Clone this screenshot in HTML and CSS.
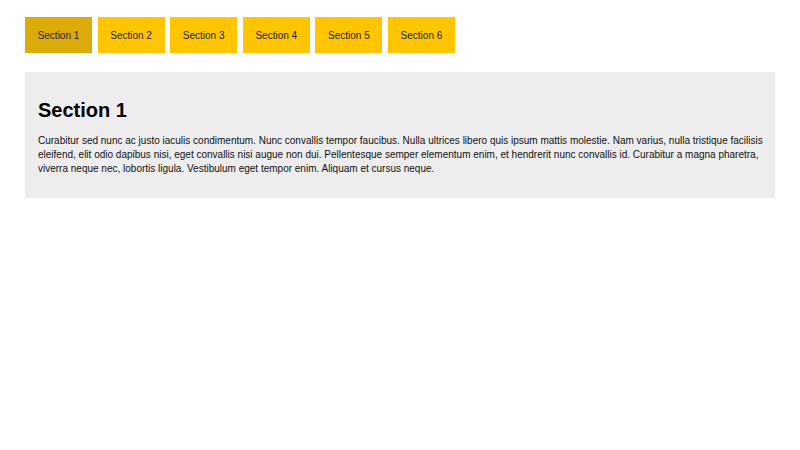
FILE: index.html
```html
<!DOCTYPE html>
<html lang="en">
<head>
    <meta charset="UTF-8">
    <meta name="viewport" content="width=device-width, initial-scale=1.0">
    <title>Tabs</title>
    <link rel="stylesheet" href="styles.css">
</head>
<body>
    <div class="tabs">
        <button class="tab active">Section 1</button>
        <button class="tab">Section 2</button>
        <button class="tab">Section 3</button>
        <button class="tab">Section 4</button>
        <button class="tab">Section 5</button>
        <button class="tab">Section 6</button>
    </div>

    <div class="tab-content">
        <h2>Section 1</h2>
        <p>Curabitur sed nunc ac justo iaculis condimentum. Nunc convallis tempor faucibus. Nulla ultrices libero quis ipsum mattis molestie. Nam varius, nulla tristique facilisis eleifend, elit odio dapibus nisi, eget convallis nisi augue non dui. Pellentesque semper elementum enim, et hendrerit nunc convallis id. Curabitur a magna pharetra, viverra neque nec, lobortis ligula. Vestibulum eget tempor enim. Aliquam et cursus neque.</p>
    </div>
</body>
</html>
```

FILE: styles.css
```css
body {
    font-family: 'Liberation Sans', Arial, sans-serif;
    background-color: #fff;
    color: #111;
    margin: 0;
    padding: 17px 25px;
}

.tabs {
    display: flex;
    gap: 5.6px;
    margin-bottom: 19px;
}

.tab {
    font-family: inherit;
    font-size: 10px;
    color: #222;
    background-color: #fec500;
    border: none;
    width: 67px;
    height: 36px;
    padding: 0;
    cursor: pointer;
}

.tab:hover {
    background-color: #f2bb00;
}

.tab.active {
    background-color: #dbab09;
}

.tab-content {
    background-color: #ededed;
    padding: 26px 10px 22px 13px;
}

.tab-content h2 {
    font-size: 20px;
    line-height: 24px;
    margin: 0 0 12px;
    color: #000;
}

.tab-content p {
    font-size: 10px;
    line-height: 14px;
    margin: 0;
}
```
